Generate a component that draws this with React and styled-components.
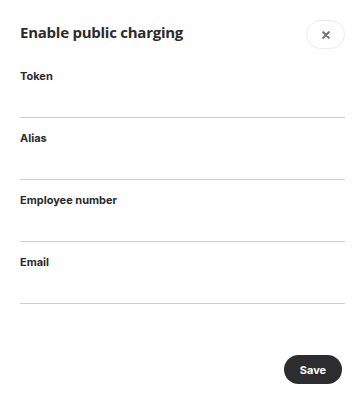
import React from 'react'
import styled, { createGlobalStyle } from 'styled-components'

const GlobalStyle = createGlobalStyle`
    body {
        margin: 0;
        background: #fff;
        font-family: Inter, "Liberation Sans", sans-serif;
    }
`

const Dialog = styled.div`
    width: 364px;
    height: 409px;
    box-sizing: border-box;
    padding: 20px 19px 25px 20px;
    display: flex;
    flex-direction: column;
`

const Header = styled.div`
    display: flex;
    justify-content: space-between;
    align-items: flex-start;
`

const Title = styled.h2`
    margin: 2px 0 0;
    font-family: "Open Sans", "Noto Sans", sans-serif;
    font-size: 15px;
    font-weight: 700;
    color: #2b2b2b;
    letter-spacing: -0.25px;
`

const CloseButton = styled.button`
    width: 39px;
    height: 29px;
    border-radius: 15px;
    border: 1px solid #f1e9e9;
    background: #fff;
    display: flex;
    align-items: center;
    justify-content: center;
    padding: 0;
    cursor: pointer;
`

const Form = styled.form`
    display: flex;
    flex-direction: column;
    margin-top: 20px;
    flex: 1;
`

const Field = styled.label`
    display: flex;
    flex-direction: column;
    height: 62px;
`

const Label = styled.span`
    font-size: 11px;
    font-weight: 700;
    color: #2b2b2b;
    line-height: 14px;
`

const Input = styled.input`
    border: none;
    border-bottom: 1px solid #d3ccc7;
    outline: none;
    height: 32px;
    padding: 0;
    font-family: inherit;
    font-size: 12px;
    margin-top: 2px;
    background: transparent;
`

const Footer = styled.div`
    display: flex;
    justify-content: flex-end;
`

const SaveButton = styled.button`
    width: 58px;
    height: 29px;
    border-radius: 15px;
    border: none;
    background: #2d2d2f;
    color: #fff;
    font-family: inherit;
    font-size: 11px;
    font-weight: 700;
    margin-right: 3px;
    cursor: pointer;
`

const fields = ['Token', 'Alias', 'Employee number', 'Email']

const App = () => {
    return (
        <>
            <GlobalStyle />
            <Dialog>
                <Header>
                    <Title>Enable public charging</Title>
                    <CloseButton aria-label="Close">
                        <svg width="8" height="8" viewBox="0 0 10 10">
                            <path d="M1.5 1.5 L8.5 8.5 M8.5 1.5 L1.5 8.5" stroke="#767676" strokeWidth="2.6" strokeLinecap="round" />
                        </svg>
                    </CloseButton>
                </Header>
                <Form onSubmit={e => e.preventDefault()}>
                    {fields.map(name => (
                        <Field key={name}>
                            <Label>{name}</Label>
                            <Input type="text" />
                        </Field>
                    ))}
                </Form>
                <Footer>
                    <SaveButton>Save</SaveButton>
                </Footer>
            </Dialog>
        </>
    )
}

export default App
